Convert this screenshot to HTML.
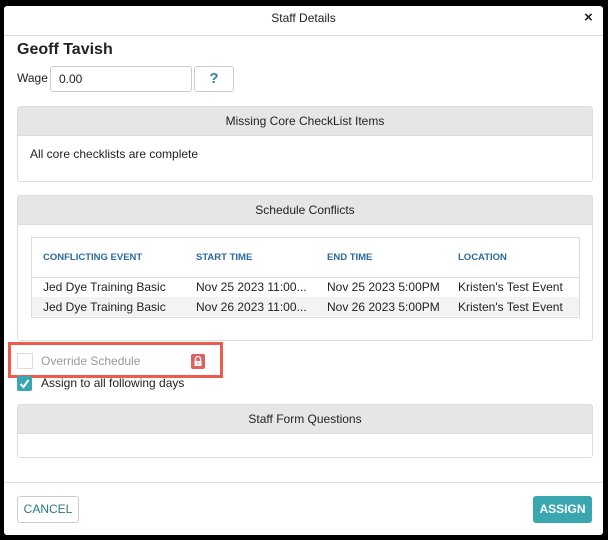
<!DOCTYPE html>
<html><head><style>
body{margin:0;width:608px;height:540px;background:#000;font-family:"Liberation Sans",sans-serif;position:relative;overflow:hidden;font-size:12px;color:#222}
.a{position:absolute}
.dlg{left:4px;top:6px;width:599px;height:529px;background:#fff;border-radius:3px}
.panel{position:absolute;left:17px;width:574px;border:1px solid #ddd;border-radius:3px;background:#fff}
.ph{background:#e6e6e6;border-bottom:1px solid #ddd;text-align:center;font-size:12px;color:#222}
th{color:#2a6a9a;font-size:9.5px;font-weight:bold;text-align:left}
td{white-space:nowrap}
</style></head><body>
<div class="a dlg"></div>
<div class="a" style="left:4px;top:6px;width:599px;height:29px;border-bottom:1px solid #ddd;text-align:center;line-height:24px;font-size:12px">Staff Details</div>
<div class="a" style="left:584px;top:9px;font-size:15px;font-weight:bold">×</div>
<div class="a" style="left:17px;top:41px;font-size:16px;font-weight:bold">Geoff Tavish</div>
<div class="a" style="left:17px;top:71px">Wage</div>
<div class="a" style="left:50px;top:66px;border:1px solid #ccc;border-radius:3px;line-height:25px;padding-left:8px;box-sizing:border-box;width:142px;height:26px">0.00</div>
<div class="a" style="left:194px;top:66px;width:40px;height:26px;border:1px solid #ccc;border-radius:3px;box-sizing:border-box;text-align:center;line-height:24px;color:#2a8a96;font-weight:bold;font-size:15px">?</div>
<div class="panel" style="top:106px;height:74px"><div class="ph" style="height:28px;line-height:28px">Missing Core CheckList Items</div>
<div style="padding:11px 12px">All core checklists are complete</div></div>
<div class="panel" style="top:195px;height:144px"><div class="ph" style="height:28px;line-height:28px">Schedule Conflicts</div>
<div class="a" style="left:13px;top:41px;width:547px;height:79px;border:1px solid #ddd">
<table style="border-collapse:collapse;width:100%;font-size:12px;table-layout:fixed">
<colgroup><col style="width:163px"><col style="width:131px"><col style="width:131px"><col></colgroup>
<tr style="height:39px;border-bottom:1px solid #ddd"><th style="padding-left:11px">CONFLICTING EVENT</th><th>START TIME</th><th>END TIME</th><th>LOCATION</th></tr>
<tr style="height:20px"><td style="padding-left:11px">Jed Dye Training Basic</td><td>Nov 25 2023 11:00...</td><td>Nov 25 2023 5:00PM</td><td>Kristen's Test Event</td></tr>
<tr style="height:19px;background:#f3f3f3"><td style="padding-left:11px">Jed Dye Training Basic</td><td>Nov 26 2023 11:00...</td><td>Nov 26 2023 5:00PM</td><td>Kristen's Test Event</td></tr>
</table></div></div>
<div class="a" style="left:8px;top:342px;width:209px;height:30px;border:3px solid #ee5a4c"></div>
<div class="a" style="left:17px;top:353px;width:14px;height:14px;border:1px solid #ddd"></div>
<div class="a" style="left:41px;top:354px;color:#999">Override Schedule</div>
<div class="a" style="left:191px;top:354px;width:14px;height:15px;background:#e06060;border-radius:2px"><svg width="14" height="15"><path d="M4.5 7V5a2.5 2.5 0 0 1 5 0v2" stroke="#fff" fill="none" stroke-width="1.3"/><rect x="3.5" y="7" width="7" height="5" fill="#fff"/><rect x="6.5" y="8.5" width="1" height="2" fill="#e06060"/></svg></div>
<div class="a" style="left:17px;top:376px;width:15px;height:15px;background:#3aa6b0;border-radius:2px"><svg width="15" height="15"><path d="M3.5 8l3 3 5-7" stroke="#fff" stroke-width="2" fill="none"/></svg></div>
<div class="a" style="left:41px;top:376px">Assign to all following days</div>
<div class="panel" style="top:404px;height:52px"><div class="ph" style="height:28px;line-height:28px">Staff Form Questions</div></div>
<div class="a" style="left:4px;top:482px;width:599px;border-top:1px solid #ddd"></div>
<div class="a" style="left:17px;top:496px;width:62px;height:27px;border:1px solid #ccc;border-radius:3px;box-sizing:border-box;text-align:center;line-height:25px;color:#2a7a86">CANCEL</div>
<div class="a" style="left:533px;top:496px;width:59px;height:27px;background:#3aa6b0;border-radius:3px;text-align:center;line-height:27px;color:#fff;font-weight:bold">ASSIGN</div>
</body></html>
